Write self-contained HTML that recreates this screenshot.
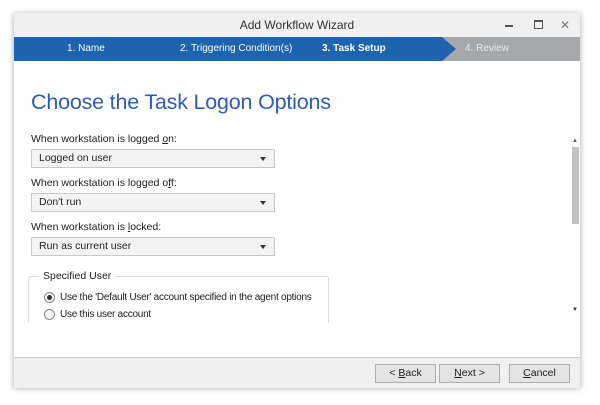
<!DOCTYPE html><html><head><style>
body{margin:0;width:600px;height:405px;background:#fff;font-family:"Liberation Sans",sans-serif;font-size:10.5px;color:#1e1e1e;position:relative;overflow:hidden}
.win{position:absolute;left:14px;top:13px;width:566px;height:374px;background:#fff;box-shadow:0 1px 6px rgba(0,0,0,.35)}
.tb{position:absolute;left:0;top:0;width:566px;height:24px;background:#f0f0f0;text-align:center;line-height:24px;font-size:12px;color:#333}
.steps{position:absolute;left:0;top:24px;width:566px;height:24px;background:#a5a8ab}
.blue{position:absolute;left:0;top:0;width:428px;height:24px;background:#1d63ad}
.arr{position:absolute;left:428px;top:0;width:0;height:0;border-top:12px solid transparent;border-bottom:12px solid transparent;border-left:14px solid #1d63ad}
.st{position:absolute;top:0;line-height:24px;color:#fff;font-size:10px}
h1{position:absolute;left:17px;top:77px;margin:0;font-weight:normal;font-size:21.5px;color:#2f5cb8;letter-spacing:-0.2px}
.lbl{position:absolute;left:17px}
.dd{position:absolute;left:17px;width:242px;height:17px;border:1px solid #c8c8c8;background:#f4f4f4;line-height:17px;text-indent:7px}
.dd:after{content:"";position:absolute;right:8px;top:7px;border-left:3px solid transparent;border-right:3px solid transparent;border-top:4px solid #333}
.grp{position:absolute;left:14px;top:263px;width:299px;height:60px;border:1px solid #dcdcdc;border-bottom:none;border-radius:3px}
.rad{position:absolute;left:30px;width:9px;height:9px;border:1px solid #888;border-radius:50%;background:#f5f5f5}
.foot{position:absolute;left:0;top:344px;width:566px;height:30px;background:#f0f0f0;border-top:1px solid #c8c8c8}
.btn{position:absolute;top:6px;width:59px;height:17px;border:1px solid #adadad;background:#e3e3e3;text-align:center;line-height:17px}
</style></head><body>
<div class="win">
<div class="tb">Add Workflow Wizard
<span style="position:absolute;left:491px;top:12px;width:8px;height:2px;background:#555"></span>
<span style="position:absolute;left:520px;top:7px;width:7px;height:6px;border:1px solid #555;border-top-width:2px"></span>
<span style="position:absolute;left:546px;top:0;font-size:12px;color:#777">✕</span></div>
<div class="steps"><div class="blue"></div><div class="arr"></div>
<span class="st" style="left:53px">1. Name</span>
<span class="st" style="left:166px">2. Triggering Condition(s)</span>
<span class="st" style="left:308px;font-weight:bold">3. Task Setup</span>
<span class="st" style="left:451px;color:#e6e6e6">4. Review</span></div>
<h1>Choose the Task Logon Options</h1>
<div class="lbl" style="top:120px">When workstation is logged <u>o</u>n:</div>
<div class="dd" style="top:136px">Logged on user</div>
<div class="lbl" style="top:164px">When workstation is logged o<u>f</u>f:</div>
<div class="dd" style="top:180px">Don't run</div>
<div class="lbl" style="top:208px">When workstation is <u>l</u>ocked:</div>
<div class="dd" style="top:224px">Run as current user</div>
<div class="grp"></div>
<div style="position:absolute;left:25px;top:257px;background:#fff;padding:0 4px">Specified User</div>
<div class="rad" style="top:279px"><div style="margin:2px;width:5px;height:5px;border-radius:50%;background:#333"></div></div>
<div style="position:absolute;left:46px;top:279px;font-size:10px;letter-spacing:-0.25px;white-space:nowrap">Use the 'Default User' account specified in the agent options</div>
<div class="rad" style="top:296px"></div>
<div style="position:absolute;left:46px;top:296px;font-size:10px;letter-spacing:-0.25px">Use this user account</div>
<div style="position:absolute;left:14px;top:310px;width:320px;height:30px;background:#fff"></div>
<div style="position:absolute;left:558px;top:125px;font-size:6px;color:#555">▲</div>
<div style="position:absolute;left:558px;top:134px;width:7px;height:77px;background:#c2c2c2"></div>
<div style="position:absolute;left:558px;top:294px;font-size:6px;color:#333">▼</div>
<div class="foot">
<div class="btn" style="left:361px">&lt; <u>B</u>ack</div>
<div class="btn" style="left:425px"><u>N</u>ext &gt;</div>
<div class="btn" style="left:495px"><u>C</u>ancel</div>
</div>
</div>
</body></html>
